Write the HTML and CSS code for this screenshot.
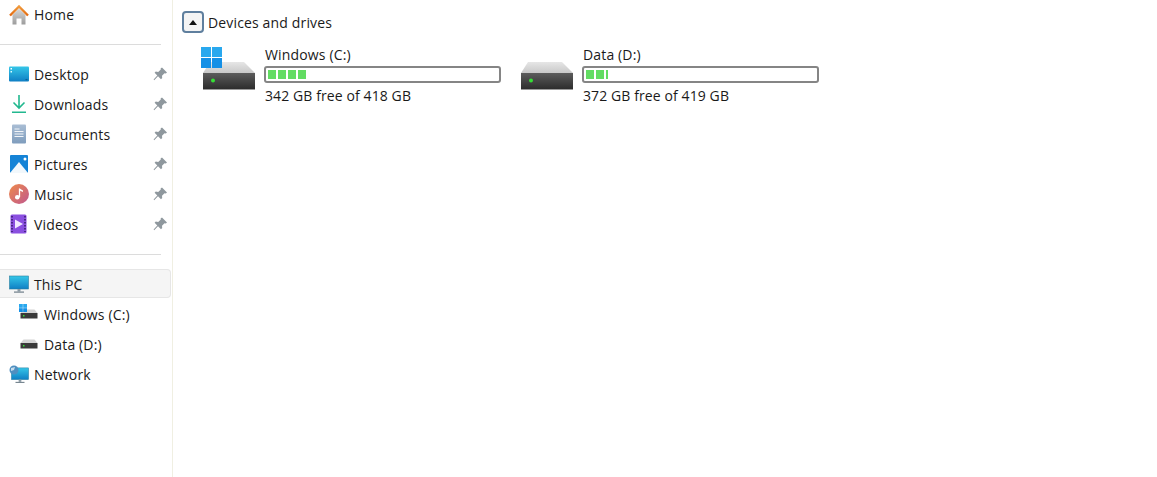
FILE: index.html
```html
<!DOCTYPE html>
<html lang="en">
<head>
    <meta charset="UTF-8">
    <title>This PC</title>
    <link rel="stylesheet" href="styles.css">
</head>
<body>
    <svg class="defs" width="0" height="0">
        <defs>
            <linearGradient id="sky" x1="0" y1="0" x2="0" y2="1">
                <stop offset="0" stop-color="#35c6e8"/>
                <stop offset="1" stop-color="#0f7fc4"/>
            </linearGradient>
            <linearGradient id="roof" x1="0" y1="0" x2="0" y2="1">
                <stop offset="0" stop-color="#e6e6e6"/>
                <stop offset="1" stop-color="#c8c8c8"/>
            </linearGradient>
            <linearGradient id="front" x1="0" y1="0" x2="0" y2="1">
                <stop offset="0" stop-color="#5c5c5c"/>
                <stop offset="1" stop-color="#2a2a2a"/>
            </linearGradient>
            <linearGradient id="walls" x1="0" y1="0" x2="0" y2="1">
                <stop offset="0" stop-color="#d8d8d8"/>
                <stop offset="1" stop-color="#9c9c9c"/>
            </linearGradient>
            <linearGradient id="tiles" x1="0" y1="0" x2="0" y2="1">
                <stop offset="0" stop-color="#f09a3c"/>
                <stop offset="1" stop-color="#e2690f"/>
            </linearGradient>
            <linearGradient id="doc" x1="0" y1="0" x2="0" y2="1">
                <stop offset="0" stop-color="#a9bdd4"/>
                <stop offset="1" stop-color="#7f9dbd"/>
            </linearGradient>
            <linearGradient id="note" x1="0" y1="0" x2="1" y2="1">
                <stop offset="0" stop-color="#ee8a4a"/>
                <stop offset="1" stop-color="#c0588f"/>
            </linearGradient>
            <symbol id="pin" viewBox="0 0 14 14">
                <path d="M9 0.500 14 5.500 12.800 6.500 11.500 6.200 9 8.700 9.200 11 8 12.200 5 9.200 1.200 13.200 0.600 12.600 4.300 8.500 1.600 5.800 2.800 4.600 5.200 4.900 7.800 2.400 7.600 1.500Z" fill="#8f989e"/>
            </symbol>
            <symbol id="drive" viewBox="0 0 54 30">
                <path d="M8 1H42L53 12H1Z" fill="url(#roof)"/>
                <rect x="1" y="12" width="52" height="17" fill="url(#front)"/>
                <rect x="1" y="28" width="52" height="1" fill="#9a9a9a"/>
                <circle cx="11" cy="19.500" r="2" fill="#35e035"/>
            </symbol>
            <symbol id="drive-small" viewBox="0 0 18 10">
                <path d="M3.500 0.500H14.500L17.500 4H0.500Z" fill="#d4d4d4"/>
                <rect x="0.500" y="4" width="17" height="5.500" fill="#3a3a3a"/>
                <rect x="3" y="6" width="1.500" height="1.500" fill="#35e035"/>
            </symbol>
            <symbol id="win" viewBox="0 0 21 21">
                <rect width="10" height="10" fill="#29a8ee"/>
                <rect x="11" width="10" height="10" fill="#29a8ee"/>
                <rect y="11" width="10" height="10" fill="#1590e6"/>
                <rect x="11" y="11" width="10" height="10" fill="#1590e6"/>
            </symbol>
            <symbol id="monitor" viewBox="0 0 20 20">
                <rect x="0.500" y="1" width="19" height="13" fill="url(#sky)" stroke="#2a7f9f" stroke-width="0.600"/>
                <rect x="8.500" y="14" width="3" height="2.500" fill="#8a9aa5"/>
                <rect x="5" y="16.500" width="10" height="1.200" fill="#6f7f8a"/>
            </symbol>
        </defs>
    </svg>

    <div class="window">
        <nav class="sidebar">
            <div class="nav-row nav-home">
                <svg class="nav-icon" viewBox="0 0 20 20">
                    <path d="M3.500 10 10 3.500 16.500 10V19.500H12.500V13.500H7.500V19.500H3.500Z" fill="url(#walls)"/>
                    <path d="M1 10.500 10 1.500 19 10.500" fill="none" stroke="url(#tiles)" stroke-width="2.400"/>
                </svg>
                <span>Home</span>
            </div>
            <hr class="nav-rule">
            <div class="nav-row nav-pinned">
                <svg class="nav-icon" viewBox="0 0 20 20">
                    <rect y="2.500" width="20" height="15" rx="1" fill="url(#sky)"/>
                    <rect x="1.500" y="4" width="1.500" height="1.500" fill="#fff"/>
                    <rect x="1.500" y="7" width="1.500" height="1.500" fill="#dff"/>
                    <rect x="16.500" y="15" width="2" height="1.200" fill="#0b5f94"/>
                </svg>
                <span>Desktop</span>
                <svg class="pin"><use href="#pin"/></svg>
            </div>
            <div class="nav-row nav-pinned">
                <svg class="nav-icon" viewBox="0 0 20 20">
                    <path d="M10 1V14M4.500 8.500 10 14 15.500 8.500" fill="none" stroke="#22b88f" stroke-width="1.600"/>
                    <rect x="3" y="17.500" width="14" height="1.500" fill="#22b88f"/>
                </svg>
                <span>Downloads</span>
                <svg class="pin"><use href="#pin"/></svg>
            </div>
            <div class="nav-row nav-pinned">
                <svg class="nav-icon" viewBox="0 0 20 20">
                    <rect x="3" y="0.500" width="14" height="19" rx="1" fill="url(#doc)"/>
                    <path d="M5.500 5H10.500M5.500 7.500H14.500M5.500 10H14.500M5.500 12.500H14.500" stroke="#f2f5f8" stroke-width="1"/>
                </svg>
                <span>Documents</span>
                <svg class="pin"><use href="#pin"/></svg>
            </div>
            <div class="nav-row nav-pinned">
                <svg class="nav-icon" viewBox="0 0 20 20">
                    <rect x="1" y="1" width="18" height="18" rx="1" fill="#1583d6"/>
                    <path d="M1 19 10 8 19 19Z" fill="#f2f8fc"/>
                    <circle cx="16" cy="5" r="1.500" fill="#fff"/>
                </svg>
                <span>Pictures</span>
                <svg class="pin"><use href="#pin"/></svg>
            </div>
            <div class="nav-row nav-pinned">
                <svg class="nav-icon" viewBox="0 0 20 20">
                    <circle cx="10" cy="10" r="10" fill="url(#note)"/>
                    <path d="M10.500 4.500V13" stroke="#fff" stroke-width="1.300"/>
                    <path d="M10.500 4.500 14 6.500V8L10.500 6.500Z" fill="#fff"/>
                    <circle cx="8.300" cy="13.300" r="2.300" fill="#fff"/>
                </svg>
                <span>Music</span>
                <svg class="pin"><use href="#pin"/></svg>
            </div>
            <div class="nav-row nav-pinned">
                <svg class="nav-icon" viewBox="0 0 20 20">
                    <rect x="1.500" y="0.500" width="16" height="19" rx="1.500" fill="#8a4fe0"/>
                    <path d="M3 2V18" stroke="#2f1760" stroke-width="1.400" stroke-dasharray="1.500 1.500"/>
                    <path d="M16 2V18" stroke="#2f1760" stroke-width="1.400" stroke-dasharray="1.500 1.500"/>
                    <path d="M6 5.500 14 10 6 14.500Z" fill="#f1e9ff"/>
                </svg>
                <span>Videos</span>
                <svg class="pin"><use href="#pin"/></svg>
            </div>
            <hr class="nav-rule nav-rule-low">
            <div class="nav-row nav-selected">
                <svg class="nav-icon"><use href="#monitor"/></svg>
                <span>This PC</span>
            </div>
            <div class="nav-row nav-child">
                <span class="nav-drive">
                    <svg class="nav-drive-body"><use href="#drive-small"/></svg>
                    <svg class="nav-drive-win"><use href="#win"/></svg>
                </span>
                <span>Windows (C:)</span>
            </div>
            <div class="nav-row nav-child">
                <span class="nav-drive">
                    <svg class="nav-drive-body"><use href="#drive-small"/></svg>
                </span>
                <span>Data (D:)</span>
            </div>
            <div class="nav-row">
                <span class="nav-network">
                    <svg class="nav-icon"><use href="#monitor"/></svg>
                    <svg class="nav-globe" viewBox="0 0 10 10">
                        <circle cx="5" cy="5" r="4.500" fill="#4f8fc0"/>
                        <path d="M2 3 6 2 5 5 2 6Z" fill="#c5dcec"/>
                    </svg>
                </span>
                <span>Network</span>
            </div>
        </nav>

        <main class="content">
            <div class="group-head">
                <button class="collapse" type="button"><span class="caret"></span></button>
                <span>Devices and drives</span>
            </div>
            <div class="drives">
                <div class="drive">
                    <span class="drive-art">
                        <svg class="drive-body"><use href="#drive"/></svg>
                        <svg class="drive-win"><use href="#win"/></svg>
                    </span>
                    <div class="drive-info">
                        <div class="drive-name">Windows (C:)</div>
                        <div class="meter"><div class="meter-fill" style="width: 38px"></div></div>
                        <div class="drive-free">342 GB free of 418 GB</div>
                    </div>
                </div>
                <div class="drive">
                    <span class="drive-art">
                        <svg class="drive-body"><use href="#drive"/></svg>
                    </span>
                    <div class="drive-info">
                        <div class="drive-name">Data (D:)</div>
                        <div class="meter"><div class="meter-fill" style="width: 22px"></div></div>
                        <div class="drive-free">372 GB free of 419 GB</div>
                    </div>
                </div>
            </div>
        </main>
    </div>
</body>
</html>
```

FILE: styles.css
```css
* {
    box-sizing: border-box;
}
body {
    margin: 0;
    height: 477px;
    overflow: hidden;
    background: #fff;
    color: #1a1a1a;
    font-family: "Open Sans", "Noto Sans", sans-serif;
    font-size: 14px;
    letter-spacing: 0.15px;
}
.defs {
    display: block;
    height: 0;
}
.window {
    display: flex;
    height: 477px;
}
.sidebar {
    width: 173px;
    flex: none;
    border-right: 1px solid #f0efe2;
}
.nav-row {
    display: flex;
    align-items: center;
    height: 30px;
    padding-left: 9px;
    padding-right: 5px;
    gap: 5px;
}
.nav-row span {
    line-height: 20px;
}
.nav-home {
    height: 29px;
}
.nav-pinned span {
    padding-top: 2px;
}
.nav-icon {
    width: 20px;
    height: 20px;
    flex: none;
}
.pin {
    width: 14px;
    height: 14px;
    margin-left: auto;
}
.nav-rule {
    margin: 15px 11px 14px 0;
    border: 0;
    border-top: 1px solid #dcdcdc;
    height: 1px;
}
.nav-rule-low {
    margin: 15px 11px 14px 0;
}
.nav-selected {
    height: 29px;
    margin: 0 1px 2px 0;
    padding-top: 3px;
    background: #f5f5f5;
    border: 1px solid #e6e6e6;
    border-left: 0;
    border-radius: 0 4px 4px 0;
}
.nav-child {
    padding-left: 19px;
}
.nav-drive {
    position: relative;
    width: 20px;
    height: 20px;
    flex: none;
}
.nav-drive-body {
    position: absolute;
    left: 1px;
    top: 4px;
    width: 18px;
    height: 10px;
}
.nav-drive-win {
    position: absolute;
    left: 0;
    top: -1px;
    width: 8px;
    height: 8px;
}
.nav-network {
    position: relative;
    width: 20px;
    height: 20px;
    flex: none;
}
.nav-network .nav-icon {
    position: absolute;
    left: 2px;
    top: 2px;
    width: 18px;
    height: 18px;
}
.nav-globe {
    position: absolute;
    left: 0;
    top: 0;
    width: 10px;
    height: 10px;
}
.content {
    flex: 1;
    padding: 11px 0 0 9px;
}
.group-head {
    display: flex;
    align-items: center;
    gap: 4px;
    height: 22px;
}
.collapse {
    width: 22px;
    height: 22px;
    padding: 0;
    border: 2px solid #5f7f9e;
    border-radius: 4px;
    background: #f4f4f4;
    display: flex;
    align-items: center;
    justify-content: center;
}
.caret {
    width: 0;
    height: 0;
    border-left: 4.5px solid transparent;
    border-right: 4.5px solid transparent;
    border-bottom: 5px solid #111;
}
.drives {
    display: flex;
    margin-top: 12px;
    padding-left: 19px;
}
.drive {
    display: flex;
    width: 318px;
}
.drive-art {
    position: relative;
    width: 63px;
    height: 47px;
    flex: none;
}
.drive-body {
    position: absolute;
    left: 1px;
    top: 16px;
    width: 54px;
    height: 30px;
}
.drive-win {
    position: absolute;
    left: 0;
    top: 2px;
    width: 21px;
    height: 21px;
}
.drive-info {
    width: 237px;
}
.drive-name,
.drive-free {
    line-height: 20px;
    height: 20px;
    padding-left: 1px;
}
.drive-free {
    letter-spacing: 0.1px;
}
.meter {
    height: 17px;
    margin: 1px 0 3px;
    border: 2px solid #858585;
    border-radius: 3px;
    background: #fff;
    padding: 2px;
}
.meter-fill {
    height: 100%;
    background: repeating-linear-gradient(90deg, #62dc62 0, #62dc62 8px, #fff 8px, #fff 10px);
    filter: blur(0.5px);
}
```
